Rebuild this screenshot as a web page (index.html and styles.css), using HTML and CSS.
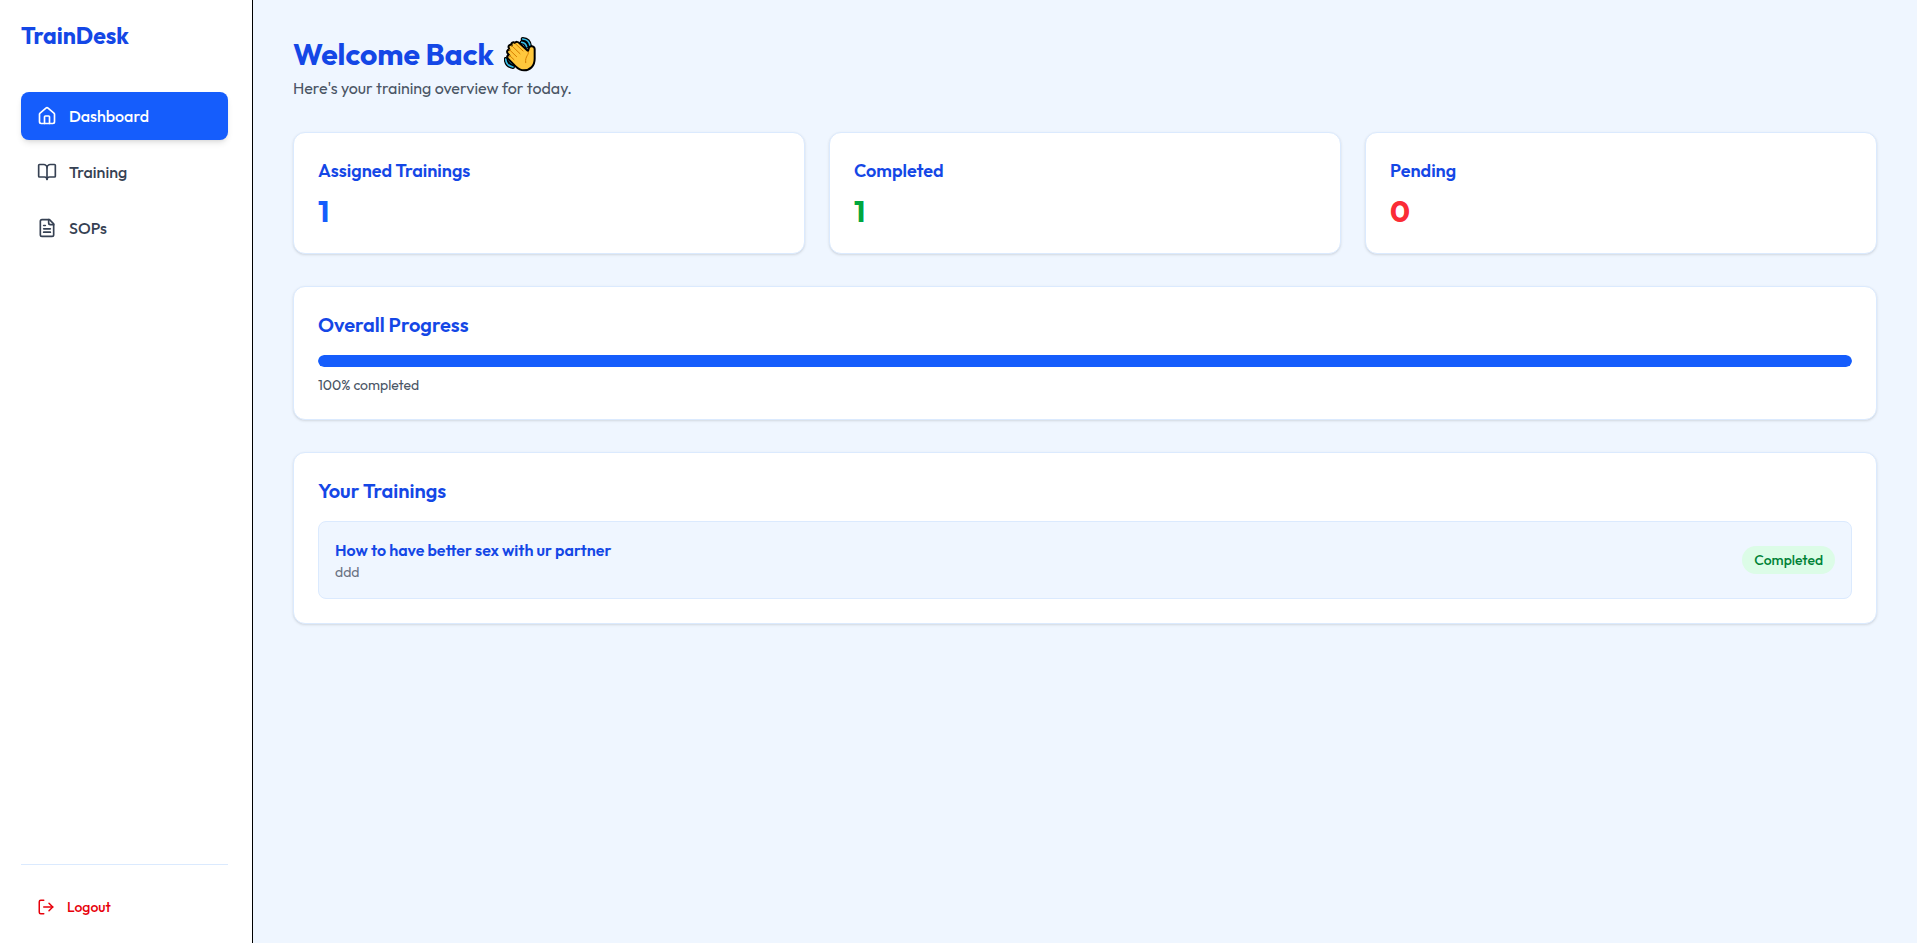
FILE: index.html
```html
<!DOCTYPE html>
<html lang="en">
<head>
  <meta charset="UTF-8">
  <meta name="viewport" content="width=device-width, initial-scale=1.0">
  <title>TrainDesk</title>
  <link rel="stylesheet" href="styles.css">
</head>
<body>
  <div class="layout">
    <aside class="sidebar">
      <div class="logo">TrainDesk</div>

      <nav class="nav">
        <a href="#" class="nav-link active">
          <svg class="icon" viewBox="0 0 24 24"><path d="M15 21v-8a1 1 0 0 0-1-1h-4a1 1 0 0 0-1 1v8"/><path d="M3 10a2 2 0 0 1 .709-1.528l7-5.999a2 2 0 0 1 2.582 0l7 5.999A2 2 0 0 1 21 10v9a2 2 0 0 1-2 2H5a2 2 0 0 1-2-2z"/></svg>
          Dashboard
        </a>
        <a href="#" class="nav-link">
          <svg class="icon" viewBox="0 0 24 24"><path d="M12 7v14"/><path d="M3 18a1 1 0 0 1-1-1V4a1 1 0 0 1 1-1h5a4 4 0 0 1 4 4 4 4 0 0 1 4-4h5a1 1 0 0 1 1 1v13a1 1 0 0 1-1 1h-6a3 3 0 0 0-3 3 3 3 0 0 0-3-3z"/></svg>
          Training
        </a>
        <a href="#" class="nav-link">
          <svg class="icon" viewBox="0 0 24 24"><path d="M15 2H6a2 2 0 0 0-2 2v16a2 2 0 0 0 2 2h12a2 2 0 0 0 2-2V7z"/><path d="M14 2v4a2 2 0 0 0 2 2h4"/><path d="M10 9H8"/><path d="M16 13H8"/><path d="M16 17H8"/></svg>
          SOPs
        </a>
      </nav>

      <div class="sidebar-footer">
        <button type="button" class="logout-btn">
          <svg class="icon icon-sm" viewBox="0 0 24 24"><path d="m16 17 5-5-5-5"/><path d="M21 12H9"/><path d="M9 21H5a2 2 0 0 1-2-2V5a2 2 0 0 1 2-2h4"/></svg>
          Logout
        </button>
      </div>
    </aside>

    <main class="main-content">
      <header class="page-header">
        <h1>
          Welcome Back
          <svg class="wave" viewBox="24 18 96 108" role="img" aria-label="Waving hand">
            <g fill="none" stroke-linecap="round" stroke-linejoin="round">
              <path d="M80 27Q100 29 102 48M77 37Q89 38 92 50M29 87Q31 108 51 111M38 85Q41 99 54 102" stroke="#000" stroke-width="12"/>
              <path d="M80 27Q100 29 102 48M77 37Q89 38 92 50M29 87Q31 108 51 111M38 85Q41 99 54 102" stroke="#35bce8" stroke-width="5"/>
            </g>
            <path d="M38 53C36 47 42 42 47 46C44 39 52 34 57 39C60 34 66 35 70 39L96 63L99 53C102 46 115 48 116 57V86C116 108 102 121 84 121C72 121 65 115 59 109L36 86C31 80 34 75 40 76L35 70C31 64 35 58 40 59Z" fill="#ffc83d" stroke="#000" stroke-width="6" stroke-linejoin="round"/>
            <path d="M39 58L62 80M47 47L72 71M57 40L81 63M40 76L54 89M96 64C102 74 86 77 89 98" fill="none" stroke="#d67d00" stroke-width="3" stroke-linecap="round"/>
          </svg>
        </h1>
        <p>Here's your training overview for today.</p>
      </header>

      <section class="stats">
        <div class="card">
          <h2 class="stat-title">Assigned Trainings</h2>
          <p class="stat-value blue">1</p>
        </div>
        <div class="card">
          <h2 class="stat-title">Completed</h2>
          <p class="stat-value green">1</p>
        </div>
        <div class="card">
          <h2 class="stat-title">Pending</h2>
          <p class="stat-value red">0</p>
        </div>
      </section>

      <section class="card">
        <h2 class="card-title">Overall Progress</h2>
        <div class="progress">
          <div class="progress-fill" style="width: 100%"></div>
        </div>
        <p class="progress-text">100% completed</p>
      </section>

      <section class="card">
        <h2 class="card-title">Your Trainings</h2>
        <div class="training">
          <div>
            <h3>How to have better sex with ur partner</h3>
            <p>ddd</p>
          </div>
          <span class="badge">Completed</span>
        </div>
      </section>
    </main>
  </div>
</body>
</html>
```
FILE: styles.css
```css
* {
  margin: 0;
  padding: 0;
  box-sizing: border-box;
}

body {
  font-family: Outfit, Lato, sans-serif;
  font-size: 16px;
  line-height: 24px;
  background: #eff6ff;
  color: #4a5565;
}

.layout {
  display: flex;
  min-height: 100vh;
}

/* Sidebar */
.sidebar {
  width: 253px;
  flex-shrink: 0;
  display: flex;
  flex-direction: column;
  padding: 20px 24px 16px 21px;
  background: white;
  border-right: 1px solid #000;
}

.logo {
  margin-bottom: 40px;
  font-size: 23px;
  line-height: 32px;
  font-weight: 700;
  color: #1447e6;
}

.nav {
  flex: 1;
  display: flex;
  flex-direction: column;
  gap: 8px;
}

.nav-link {
  display: flex;
  align-items: center;
  gap: 12px;
  padding: 12px 16px;
  border-radius: 8px;
  color: #364153;
  font-weight: 500;
  text-decoration: none;
}

.nav-link:hover {
  background: #eff6ff;
}

.nav-link.active {
  background: #155dfc;
  color: white;
  box-shadow: 0 4px 6px -1px rgba(0,0,0,0.1), 0 2px 4px -2px rgba(0,0,0,0.1);
}

.icon {
  width: 20px;
  height: 20px;
  fill: none;
  stroke: currentColor;
  stroke-width: 2;
  stroke-linecap: round;
  stroke-linejoin: round;
}

.icon-sm {
  width: 18px;
  height: 18px;
}

.sidebar-footer {
  padding-top: 22px;
  border-top: 1px solid #dbeafe;
}

.logout-btn {
  width: 100%;
  display: flex;
  align-items: center;
  gap: 12px;
  padding: 10px 16px;
  border: none;
  border-radius: 8px;
  background: none;
  color: #e7000b;
  font-family: inherit;
  font-size: 14px;
  line-height: 20px;
  font-weight: 500;
  cursor: pointer;
}

/* Main */
.main-content {
  flex: 1;
  display: flex;
  flex-direction: column;
  gap: 32px;
  padding: 36px 40px;
}

.page-header h1 {
  display: flex;
  align-items: center;
  gap: 10px;
  margin-bottom: 4px;
  font-size: 30px;
  line-height: 36px;
  font-weight: 700;
  color: #1447e6;
}

.wave {
  width: 32px;
  height: 36px;
}

.stats {
  display: grid;
  grid-template-columns: repeat(3, 1fr);
  gap: 24px;
}

.card {
  padding: 24px;
  background: white;
  border: 1px solid #dbeafe;
  border-radius: 12px;
  box-shadow: 0 1px 3px rgba(0,0,0,0.1), 0 1px 2px -1px rgba(0,0,0,0.1);
}

.stat-title {
  margin-bottom: 8px;
  font-size: 18px;
  line-height: 28px;
  font-weight: 600;
  color: #1447e6;
}

.stat-value {
  font-size: 30px;
  line-height: 36px;
  font-weight: 700;
}

.blue {
  color: #155dfc;
}

.green {
  color: #00a63e;
}

.red {
  color: #fb2c36;
}

.card-title {
  margin-bottom: 16px;
  font-size: 20px;
  line-height: 28px;
  font-weight: 600;
  color: #1447e6;
}

.progress {
  height: 12px;
  border-radius: 6px;
  background: #dbeafe;
  overflow: hidden;
}

.progress-fill {
  height: 100%;
  border-radius: 6px;
  background: #155dfc;
}

.progress-text {
  margin-top: 8px;
  font-size: 14px;
  line-height: 20px;
}

.training {
  display: flex;
  justify-content: space-between;
  align-items: center;
  padding: 16px;
  background: #eff6ff;
  border: 1px solid #dbeafe;
  border-radius: 8px;
}

.training h3 {
  font-size: 16px;
  line-height: 24px;
  font-weight: 600;
  color: #1447e6;
}

.training p {
  font-size: 14px;
  line-height: 20px;
  color: #6a7282;
}

.badge {
  padding: 4px 12px;
  border-radius: 14px;
  background: #dcfce7;
  color: #008236;
  font-size: 14px;
  line-height: 20px;
  font-weight: 500;
}
```
